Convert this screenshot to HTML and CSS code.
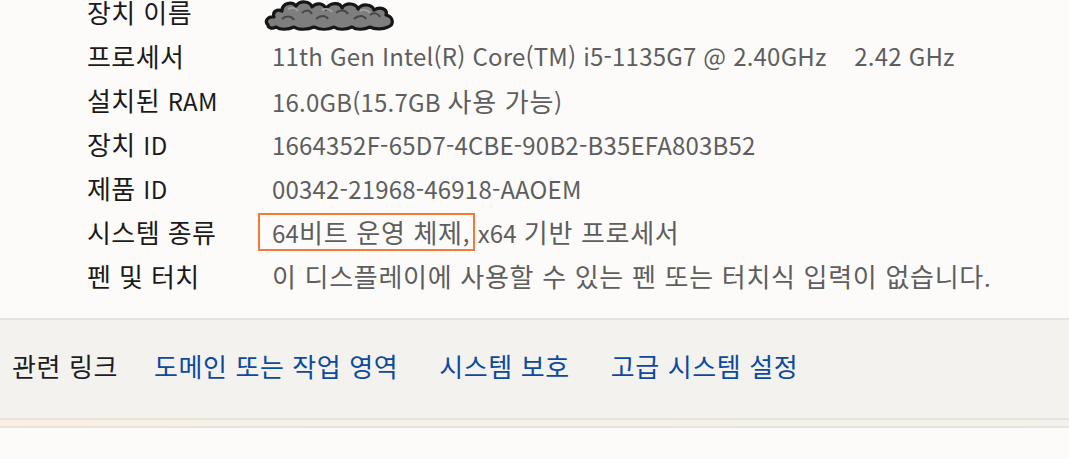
FILE: index.html
```html
<!DOCTYPE html>
<html lang="ko">
<head>
<meta charset="utf-8">
<link rel="stylesheet" href="styles.css">
</head>
<body>
<div class="page">
  <section class="specs">
    <div class="row">
      <div class="label">장치 이름</div>
      <div class="value"><svg class="blob" width="134" height="32" viewBox="0 0 134 32"><path d="M6 26 C2 22 6 17 12 18 C10 12 16 10 20 12 C20 4 30 2 34 7 C38 1 48 2 50 8 C54 3 62 4 64 10 C68 3 78 3 80 9 C84 3 94 4 96 10 C100 4 110 5 112 11 C118 7 126 10 124 16 C132 18 132 26 126 28 C120 31 112 30 108 28 C102 31 94 31 90 28 C84 31 76 31 72 28 C66 31 58 31 52 28 C46 31 36 31 32 28 C26 31 18 31 14 28 C10 30 6 29 6 26 Z" fill="#7e7e7e" stroke="#161616" stroke-width="3.2" stroke-linejoin="round"/><path d="M20 20 C24 16 30 17 32 21 M40 14 C44 10 48 11 50 15 M54 20 C58 16 64 16 66 20 M74 14 C78 10 84 11 86 15 M92 20 C96 16 102 16 104 20 M108 16 C112 13 116 14 118 18" fill="none" stroke="#474747" stroke-width="2"/><path d="M26 10 C30 8 34 9 36 12 M60 11 C64 9 68 10 70 13 M98 12 C102 10 106 11 108 14" fill="none" stroke="#a2a2a2" stroke-width="2"/></svg></div>
    </div>
    <div class="row">
      <div class="label">프로세서</div>
      <div class="value">11th Gen Intel(R) Core(TM) i5-1135G7 @ 2.40GHz&nbsp;&nbsp;&nbsp;&nbsp;2.42 GHz</div>
    </div>
    <div class="row">
      <div class="label">설치된 <span class="lat">RAM</span></div>
      <div class="value">16.0GB(15.7GB <span class="ko">사용 가능</span>)</div>
    </div>
    <div class="row">
      <div class="label">장치 <span class="lat">ID</span></div>
      <div class="value">1664352F-65D7-4CBE-90B2-B35EFA803B52</div>
    </div>
    <div class="row">
      <div class="label">제품 <span class="lat">ID</span></div>
      <div class="value">00342-21968-46918-AAOEM</div>
    </div>
    <div class="row">
      <div class="label">시스템 종류</div>
      <div class="value"><span class="mark">64<span class="ko">비트 운영 체제</span>,</span>x64 <span class="ko">기반 프로세서</span></div>
    </div>
    <div class="row">
      <div class="label">펜 및 터치</div>
      <div class="value"><span class="ko">이 디스플레이에 사용할 수 있는 펜 또는 터치식 입력이 없습니다</span>.</div>
    </div>
  </section>
  <section class="related">
    <span class="related-title">관련 링크</span>
    <a class="link" href="#">도메인 또는 작업 영역</a>
    <a class="link" href="#">시스템 보호</a>
    <a class="link" href="#">고급 시스템 설정</a>
  </section>
  <div class="footer-band"></div>
  <div class="below"></div>
</div>
</body>
</html>
```
FILE: styles.css
```css
html, body {
  margin: 0;
  padding: 0;
  background: #fcfbf9;
  overflow: hidden;
}
body {
  width: 1069px;
  height: 459px;
  font-family: "Noto Sans CJK KR", "Noto Sans", sans-serif;
}
.page {
  display: flex;
  flex-direction: column;
}
.specs {
  margin-top: -10px;
  padding: 0 0 0 87px;
  height: 328px;
  box-sizing: border-box;
  display: flex;
  flex-direction: column;
  flex-shrink: 0;
}
.row {
  display: grid;
  grid-template-columns: 185px auto;
  height: 44px;
  flex-shrink: 0;
  align-items: center;
  line-height: 44px;
}
.label {
  color: #1b1b1b;
  font-size: 26px;
  letter-spacing: 0.4px;
  white-space: nowrap;
}
.lat {
  font-size: 24px;
  letter-spacing: 0.3px;
}
.value {
  color: #5e5e5e;
  font-size: 24px;
  white-space: nowrap;
  letter-spacing: 0.2px;
  height: 44px;
}
.ko {
  font-size: 26px;
  letter-spacing: 0.7px;
}
.blob {
  display: inline-block;
  vertical-align: middle;
  margin-left: -10px;
}
.mark {
  display: inline-block;
  border: 2px solid #f47a3c;
  line-height: 33px;
  padding: 0 3px 0 12px;
  margin-left: -14px;
  margin-right: 3px;
}
.related {
  border-top: 2px solid #e8e2dc;
  background: #f4f2ef;
  height: 100px;
  flex-shrink: 0;
  box-sizing: border-box;
  display: flex;
  align-items: center;
  padding: 0 0 8px 12px;
  font-size: 26px;
  letter-spacing: 0.6px;
  gap: 36px;
}
.related-title {
  color: #1e1e1e;
}
.link {
  color: #0b4a9c;
  text-decoration: none;
}
.link + .link {
  margin-left: 5px;
}
.footer-band {
  height: 10px;
  flex-shrink: 0;
  box-sizing: border-box;
  border-top: 2px solid #e7e3dd;
  border-bottom: 2px solid #e7e3dd;
  background: linear-gradient(90deg, #fbeee2, #f6f1ea 40%, #f4f1ec);
}
.below {
  height: 40px;
  background: #fcfbf9;
}
```
